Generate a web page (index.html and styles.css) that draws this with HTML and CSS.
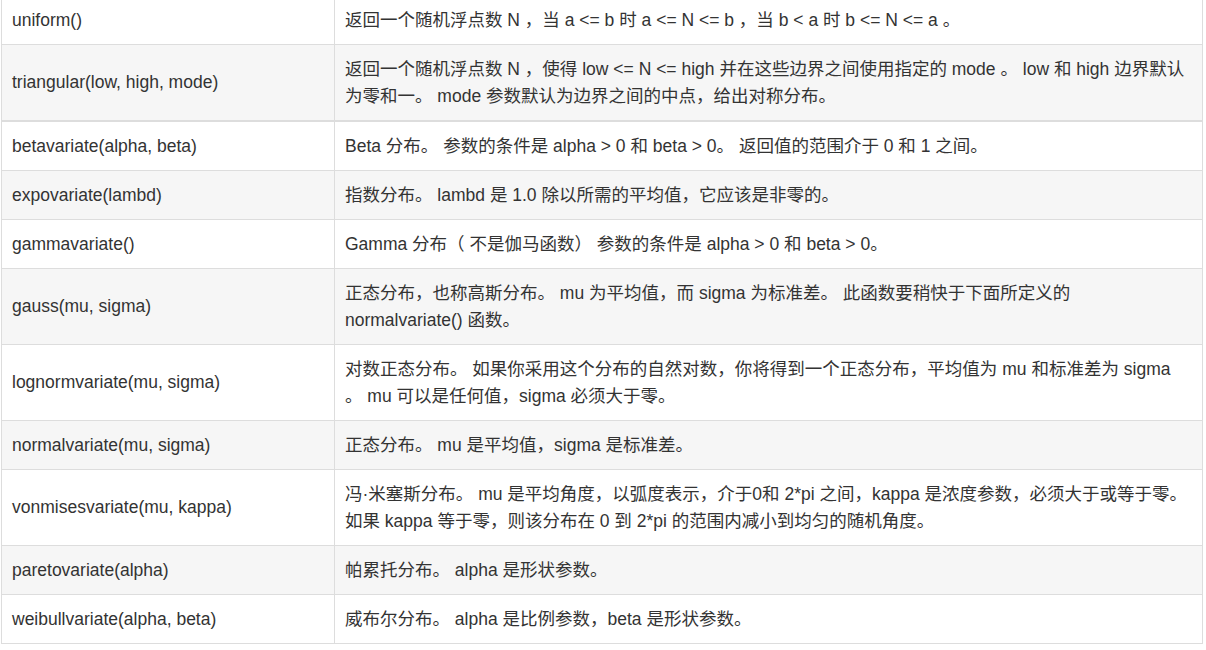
FILE: index.html
```html
<!DOCTYPE html>
<html lang="zh-CN">
<head>
<meta charset="utf-8">
<title>random</title>
<link rel="stylesheet" href="styles.css">
</head>
<body>
<table class="ref">
  <tbody>
    <tr><td class="fn">uniform()</td><td>返回一个随机浮点数 N ，当 a &lt;= b 时 a &lt;= N &lt;= b ，当 b &lt; a 时 b &lt;= N &lt;= a 。</td></tr>
    <tr class="sep"><td class="fn">triangular(low, high, mode)</td><td>返回一个随机浮点数 N ，使得 low &lt;= N &lt;= high 并在这些边界之间使用指定的 mode 。 low 和 high 边界默认<br>为零和一。 mode 参数默认为边界之间的中点，给出对称分布。</td></tr>
    <tr><td class="fn">betavariate(alpha, beta)</td><td>Beta 分布。 参数的条件是 alpha &gt; 0 和 beta &gt; 0。 返回值的范围介于 0 和 1 之间。</td></tr>
    <tr><td class="fn">expovariate(lambd)</td><td>指数分布。 lambd 是 1.0 除以所需的平均值，它应该是非零的。</td></tr>
    <tr><td class="fn">gammavariate()</td><td>Gamma 分布（ 不是伽马函数） 参数的条件是 alpha &gt; 0 和 beta &gt; 0。</td></tr>
    <tr><td class="fn">gauss(mu, sigma)</td><td>正态分布，也称高斯分布。 mu 为平均值，而 sigma 为标准差。 此函数要稍快于下面所定义的<br>normalvariate() 函数。</td></tr>
    <tr><td class="fn">lognormvariate(mu, sigma)</td><td>对数正态分布。 如果你采用这个分布的自然对数，你将得到一个正态分布，平均值为 mu 和标准差为 sigma<br>。 mu 可以是任何值，sigma 必须大于零。</td></tr>
    <tr><td class="fn">normalvariate(mu, sigma)</td><td>正态分布。 mu 是平均值，sigma 是标准差。</td></tr>
    <tr><td class="fn">vonmisesvariate(mu, kappa)</td><td>冯·米塞斯分布。 mu 是平均角度，以弧度表示，介于0和 2*pi 之间，kappa 是浓度参数，必须大于或等于零。<br>如果 kappa 等于零，则该分布在 0 到 2*pi 的范围内减小到均匀的随机角度。</td></tr>
    <tr><td class="fn">paretovariate(alpha)</td><td>帕累托分布。 alpha 是形状参数。</td></tr>
    <tr><td class="fn">weibullvariate(alpha, beta)</td><td>威布尔分布。 alpha 是比例参数，beta 是形状参数。</td></tr>
  </tbody>
</table>
</body>
</html>
```

FILE: styles.css
```css
html, body {
  margin: 0;
  padding: 0;
  background: #fff;
}

body {
  font-family: "Liberation Sans", Arial, "Noto Sans CJK SC", sans-serif;
  font-size: 17.5px;
  color: #333;
}

.ref {
  border-collapse: collapse;
  margin: -5px 0 0 1px;
  width: 1202px;
  table-layout: fixed;
  border: 1px solid #ddd;
}

.ref td {
  border: 1px solid #ddd;
  padding: 10.5px 10px;
  line-height: 27px;
  vertical-align: middle;
  text-align: left;
  white-space: nowrap;
}

.ref td.fn {
  width: 312px;
}

.ref tr:nth-child(even) td {
  background: #f6f6f6;
}

.ref tr.sep td {
  border-bottom: 2px solid #ddd;
}
```
